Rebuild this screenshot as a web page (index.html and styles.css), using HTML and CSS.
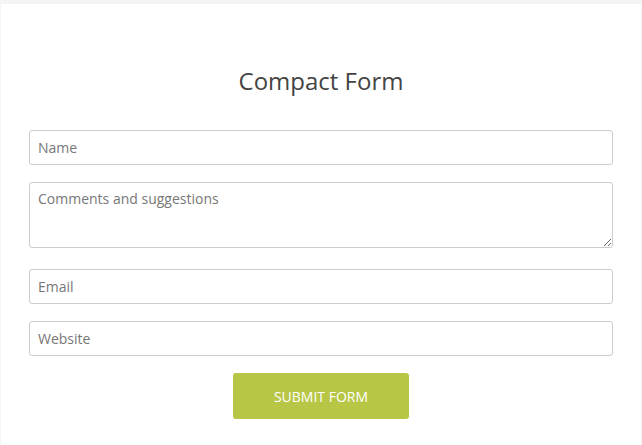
FILE: index.html
```html
<!DOCTYPE html>
<html>
<head>
<meta charset="utf-8">
<link rel="stylesheet" href="styles.css">
</head>
<body>
<div class="card">
  <h1 class="title">Compact Form</h1>
  <form class="form">
    <input class="field" type="text" placeholder="Name">
    <textarea class="field area" placeholder="Comments and suggestions"></textarea>
    <input class="field" type="text" placeholder="Email">
    <input class="field" type="text" placeholder="Website">
    <div class="actions"><button class="submit" type="button">SUBMIT FORM</button></div>
  </form>
</div>
</body>
</html>
```
FILE: styles.css
```css
html, body {
  margin: 0;
  height: 100%;
}
body {
  background: #f4f4f4;
  padding: 4px 1px 0;
  box-sizing: border-box;
  font-family: "Open Sans", sans-serif;
}
.card {
  background: #fff;
  height: 100%;
  padding: 0 28px;
  box-sizing: border-box;
}
.title {
  margin: 0;
  padding-top: 60px;
  font-size: 24px;
  font-weight: 400;
  line-height: 33px;
  color: #444;
  text-align: center;
}
.form {
  margin-top: 33px;
  display: flex;
  flex-direction: column;
  gap: 17px;
}
.field {
  display: block;
  width: 100%;
  box-sizing: border-box;
  height: 35px;
  border: 1px solid #ccc;
  border-radius: 3px;
  padding: 0 8px;
  font-family: "Open Sans", sans-serif;
  font-size: 14px;
  color: #555;
  background: #fff;
  margin: 0;
}
.field::placeholder {
  color: #777;
}
.area {
  height: 66px;
  padding-top: 6px;
  resize: vertical;
  margin-bottom: 4px;
}
.actions {
  display: flex;
  justify-content: center;
}
.submit {
  width: 176px;
  height: 46px;
  border: none;
  border-radius: 3px;
  background: #b8c645;
  color: #fff;
  font-family: "Open Sans", sans-serif;
  font-size: 14px;
}
```
